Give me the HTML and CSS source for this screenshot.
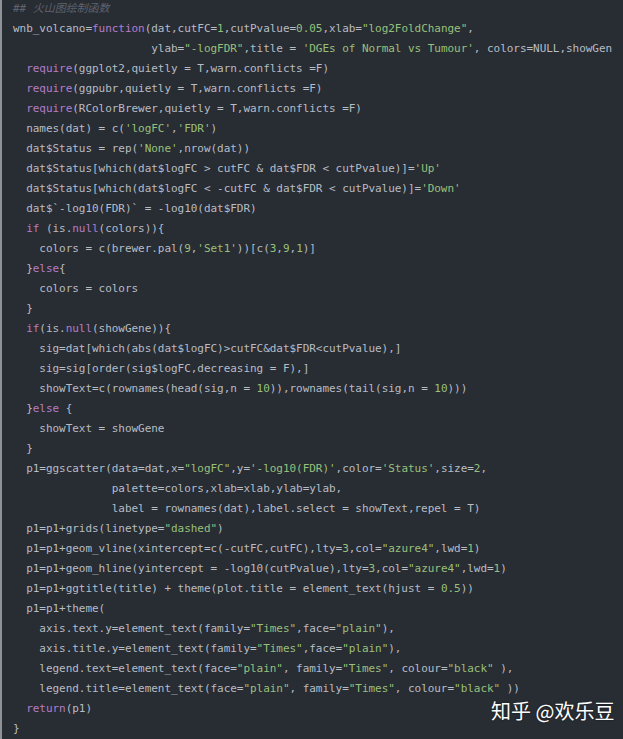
FILE: index.html
```html
<!DOCTYPE html>
<html lang="zh">
<head>
<meta charset="utf-8">
<title>wnb_volcano</title>
<link rel="stylesheet" href="styles.css">
</head>
<body>
<div class="code-block">
<pre class="code"><span class="c">## 火山图绘制函数</span>
wnb_volcano=<span class="k">function</span>(dat,cutFC=<span class="n">1</span>,cutPvalue=<span class="n">0.05</span>,xlab=<span class="s">"log2FoldChange"</span>,
                     ylab=<span class="s">"-logFDR"</span>,title = <span class="s">'DGEs of Normal vs Tumour'</span>, colors=NULL,showGene=NULL){
  <span class="k">require</span>(ggplot2,quietly = T,warn.conflicts =F)
  <span class="k">require</span>(ggpubr,quietly = T,warn.conflicts =F)
  <span class="k">require</span>(RColorBrewer,quietly = T,warn.conflicts =F)
  names(dat) = c(<span class="s">'logFC'</span>,<span class="s">'FDR'</span>)
  dat$Status = rep(<span class="s">'None'</span>,nrow(dat))
  dat$Status[which(dat$logFC &gt; cutFC &amp; dat$FDR &lt; cutPvalue)]=<span class="s">'Up'</span>
  dat$Status[which(dat$logFC &lt; -cutFC &amp; dat$FDR &lt; cutPvalue)]=<span class="s">'Down'</span>
  dat$`-log10(FDR)` = -log10(dat$FDR)
  <span class="k">if</span> (is.<span class="k">null</span>(colors)){
    colors = c(brewer.pal(<span class="n">9</span>,<span class="s">'Set1'</span>))[c(<span class="n">3</span>,<span class="n">9</span>,<span class="n">1</span>)]
  }<span class="k">else</span>{
    colors = colors
  }
  <span class="k">if</span>(is.<span class="k">null</span>(showGene)){
    sig=dat[which(abs(dat$logFC)&gt;cutFC&amp;dat$FDR&lt;cutPvalue),]
    sig=sig[order(sig$logFC,decreasing = F),]
    showText=c(rownames(head(sig,n = <span class="n">10</span>)),rownames(tail(sig,n = <span class="n">10</span>)))
  }<span class="k">else</span> {
    showText = showGene
  }
  p1=ggscatter(data=dat,x=<span class="s">"logFC"</span>,y=<span class="s">'-log10(FDR)'</span>,color=<span class="s">'Status'</span>,size=<span class="n">2</span>,
               palette=colors,xlab=xlab,ylab=ylab,
               label = rownames(dat),label.select = showText,repel = T)
  p1=p1+grids(linetype=<span class="s">"dashed"</span>)
  p1=p1+geom_vline(xintercept=c(-cutFC,cutFC),lty=<span class="n">3</span>,col=<span class="s">"azure4"</span>,lwd=<span class="n">1</span>)
  p1=p1+geom_hline(yintercept = -log10(cutPvalue),lty=<span class="n">3</span>,col=<span class="s">"azure4"</span>,lwd=<span class="n">1</span>)
  p1=p1+ggtitle(title) + theme(plot.title = element_text(hjust = <span class="n">0.5</span>))
  p1=p1+theme(
    axis.text.y=element_text(family=<span class="s">"Times"</span>,face=<span class="s">"plain"</span>),
    axis.title.y=element_text(family=<span class="s">"Times"</span>,face=<span class="s">"plain"</span>),
    legend.text=element_text(face=<span class="s">"plain"</span>, family=<span class="s">"Times"</span>, colour=<span class="s">"black"</span> ),
    legend.title=element_text(face=<span class="s">"plain"</span>, family=<span class="s">"Times"</span>, colour=<span class="s">"black"</span> ))
  <span class="k">return</span>(p1)
}</pre>
<div class="watermark">知乎 @欢乐豆</div>
</div>
</body>
</html>
```

FILE: styles.css
```css
html, body {
  margin: 0;
  padding: 0;
  background: #282c33;
}

.code-block {
  position: relative;
  width: 623px;
  height: 739px;
  box-sizing: border-box;
  border-left: 2px solid #8f9297;
  background: #282c33;
  overflow: hidden;
}

.code {
  box-sizing: border-box;
  width: 610px;
  margin: -1px 0 0 0;
  padding: 0 0 0 11px;
  font-family: "DejaVu Sans Mono", "Noto Sans CJK SC", monospace;
  font-size: 11px;
  letter-spacing: -0.04px;
  line-height: 20px;
  color: #b7bcc5;
  white-space: pre;
  overflow: hidden;
}

.k { color: #b67dc9; }
.s { color: #98c07c; }
.n { color: #98c07c; }
.c {
  color: #5d636e;
  font-style: italic;
  font-family: "DejaVu Sans Mono", "Noto Sans CJK SC", monospace;
}

.watermark {
  position: absolute;
  left: 489px;
  top: 697px;
  font-family: "Noto Sans CJK SC", sans-serif;
  font-size: 20px;
  line-height: 28px;
  color: #ffffff;
  text-shadow: 0 0 2px rgba(0, 0, 0, 0.5);
}
```
